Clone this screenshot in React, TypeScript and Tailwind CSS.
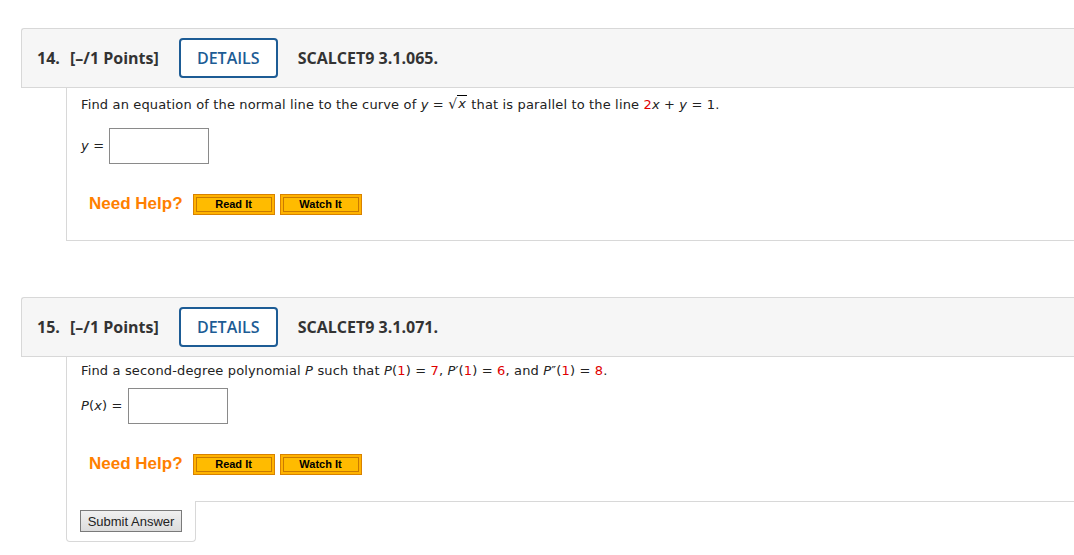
import React from "react";

const RED = "text-[#e00000]";

function Header({ num, code }: { num: string; code: string }) {
  return (
    <div className="flex h-[60px] items-center rounded-tl-[3px] border border-r-0 border-[#d8d8d8] bg-[#f6f6f6] pl-[15px] font-['Open_Sans',sans-serif] font-bold text-[16px] text-[#333]">
      <span className="w-[33px]">{num}</span>
      <span>[–/1 Points]</span>
      <button className="ml-[20px] flex h-[40px] w-[99px] items-center justify-center rounded-[4px] border-2 border-[#1d5c95] bg-white font-semibold text-[#1d5c95]">
        DETAILS
      </button>
      <span className="ml-[20px]">{code}</span>
    </div>
  );
}

function HelpRow() {
  return (
    <div className="flex h-[22px] items-center pl-[8px] font-['Liberation_Sans',Arial,sans-serif]">
      <span className="mr-[10px] text-[17px] font-bold text-[#ff8000]">Need Help?</span>
      <HelpButton label="Read It" />
      <HelpButton label="Watch It" />
    </div>
  );
}

function HelpButton({ label }: { label: string }) {
  return (
    <button className="mr-[5px] flex h-[21px] w-[82px] items-center justify-center border border-[#d98200] bg-[#ffb300] p-[2px]">
      <span className="flex h-full w-full items-center justify-center border border-[#c97a00] bg-[#ffbb00] text-[11px] font-bold text-black">
        {label}
      </span>
    </button>
  );
}

function Sqrt() {
  return (
    <span className="inline-flex items-end">
      <span className="text-[14px] leading-none">√</span>
      <span className="border-t border-black pl-[1px] pr-[1px] italic leading-[15px]">x</span>
    </span>
  );
}

function Input() {
  return <div className="h-[36px] w-[100px] border border-[#8a8a8a] bg-white" />;
}

export default function App() {
  const q = "font-['DejaVu_Sans',Verdana,sans-serif] text-[13px] tracking-[0.15px] text-[#222]";
  return (
    <div className="h-[555px] w-[1074px] overflow-hidden bg-white pl-[21px] pt-[28px]">
      <Header num="14." code="SCALCET9 3.1.065." />
      <div className="ml-[45px] h-[153px] border-b border-l border-[#d8d8d8] pl-[14px] pt-[7px]">
        <p className={`${q} leading-[18px]`}>
          Find an equation of the normal line to the curve of <i>y</i> = <Sqrt /> that is parallel to the
          line <span className={RED}>2</span>
          <i>x</i> + <i>y</i> = 1.
        </p>
        <div className={`${q} mt-[14px] flex items-center`}>
          <span className="mr-[5px]">
            <i>y</i> =
          </span>
          <Input />
        </div>
        <div className="mt-[29px]">
          <HelpRow />
        </div>
      </div>

      <div className="mt-[56px]">
        <Header num="15." code="SCALCET9 3.1.071." />
      </div>
      <div className="ml-[45px] border-l border-[#d8d8d8] pb-[26px] pl-[14px] pt-[5px]">
        <p className={`${q} leading-[18px]`}>
          Find a second-degree polynomial <i>P</i> such that <i>P</i>(<span className={RED}>1</span>) ={" "}
          <span className={RED}>7</span>, <i>P</i>′(<span className={RED}>1</span>) = <span className={RED}>6</span>, and{" "}
          <i>P</i>″(<span className={RED}>1</span>) = <span className={RED}>8</span>.
        </p>
        <div className={`${q} mt-[8px] flex items-center`}>
          <span className="mr-[5px]">
            <i>P</i>(<i>x</i>) =
          </span>
          <Input />
        </div>
        <div className="mt-[29px]">
          <HelpRow />
        </div>
      </div>
      <div className="ml-[45px] flex">
        <div className="flex h-[41px] w-[130px] items-start rounded-b-[4px] border-x border-b border-[#d8d8d8] pl-[13px] pt-[9px]">
          <button className="h-[22px] w-[102px] border border-[#7a7a7a] bg-gradient-to-b from-[#f0f0f0] to-[#dcdcdc] font-['Liberation_Sans',Arial,sans-serif] text-[13px] leading-none text-[#222]">
            Submit Answer
          </button>
        </div>
        <div className="-ml-px flex-1 border-t border-[#d8d8d8]" />
      </div>
    </div>
  );
}
